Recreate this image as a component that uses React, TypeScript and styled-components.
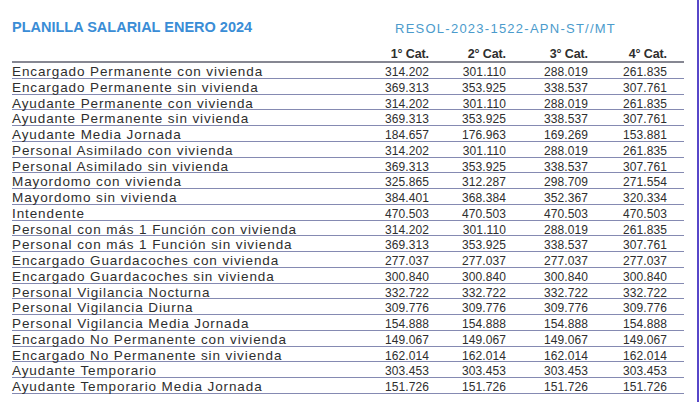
import React from "react";
import styled, { createGlobalStyle } from "styled-components";

const GlobalStyle = createGlobalStyle`
  html, body {
    margin: 0;
    padding: 0;
    background: #ffffff;
  }
  body {
    font-family: "Liberation Sans", Arial, Helvetica, sans-serif;
  }
`;

const Frame = styled.div`
  box-sizing: border-box;
  width: 699px;
  height: 402px;
  padding: 0 13px 0 12px;
  border-right: 2px solid #5747c9;
  background: #ffffff;
  overflow: hidden;
`;

const TitleRow = styled.div`
  display: grid;
  grid-template-columns: 383px 1fr;
  align-items: start;
  padding-top: 19px;
`;

const Title = styled.h1`
  margin: 0;
  font-size: 14.5px;
  line-height: 17px;
  font-weight: 700;
  color: #3a8dd6;
  white-space: nowrap;
`;

const Resol = styled.div`
  padding-top: 1px;
  font-size: 13px;
  line-height: 17px;
  letter-spacing: 1.25px;
  color: #4b9bcc;
  white-space: nowrap;
`;

const Table = styled.div`
  display: flex;
  flex-direction: column;
  margin-top: 10px;
`;

const Row = styled.div<{ $head?: boolean }>`
  box-sizing: border-box;
  display: grid;
  grid-template-columns: 1fr 77px 77px 82px 79px;
  padding-right: 17px;
  align-items: center;
  height: ${(p) => (p.$head ? "16px" : "15.75px")};
  border-bottom: ${(p) => (p.$head ? "2px solid #868792" : "1px solid #858ab2")};
  color: #2e2e2e;
  line-height: 14px;
  font-weight: ${(p) => (p.$head ? 700 : 400)};
`;

const Label = styled.span`
  padding-top: 2px;
  font-size: 13.5px;
  letter-spacing: 0.9px;
  white-space: nowrap;
`;

const Cell = styled.span<{ $head?: boolean }>`
  padding-top: ${(p) => (p.$head ? "0" : "2px")};
  font-size: ${(p) => (p.$head ? "12.5px" : "12px")};
  letter-spacing: ${(p) => (p.$head ? "-0.1px" : "0.1px")};
  text-align: right;
  white-space: nowrap;
`;

type Item = [string, string[]];

const same = (v: string) => [v, v, v, v];
const full = ["314.202", "301.110", "288.019", "261.835"];
const sin = ["369.313", "353.925", "338.537", "307.761"];

const rows: Item[] = [
  ["Encargado Permanente con vivienda", full],
  ["Encargado Permanente sin vivienda", sin],
  ["Ayudante Permanente con vivienda", full],
  ["Ayudante Permanente sin vivienda", sin],
  ["Ayudante Media Jornada", ["184.657", "176.963", "169.269", "153.881"]],
  ["Personal Asimilado con vivienda", full],
  ["Personal Asimilado sin vivienda", sin],
  ["Mayordomo con vivienda", ["325.865", "312.287", "298.709", "271.554"]],
  ["Mayordomo sin vivienda", ["384.401", "368.384", "352.367", "320.334"]],
  ["Intendente", same("470.503")],
  ["Personal con más 1 Función con vivienda", full],
  ["Personal con más 1 Función sin vivienda", sin],
  ["Encargado Guardacoches con vivienda", same("277.037")],
  ["Encargado Guardacoches sin vivienda", same("300.840")],
  ["Personal Vigilancia Nocturna", same("332.722")],
  ["Personal Vigilancia Diurna", same("309.776")],
  ["Personal Vigilancia Media Jornada", same("154.888")],
  ["Encargado No Permanente con vivienda", same("149.067")],
  ["Encargado No Permanente sin vivienda", same("162.014")],
  ["Ayudante Temporario", same("303.453")],
  ["Ayudante Temporario Media Jornada", same("151.726")],
];

const cats = ["1° Cat.", "2° Cat.", "3° Cat.", "4° Cat."];

const App: React.FC = () => {
  return (
    <>
      <GlobalStyle />
      <Frame>
        <TitleRow>
          <Title>PLANILLA SALARIAL ENERO 2024</Title>
          <Resol>RESOL-2023-1522-APN-ST//MT</Resol>
        </TitleRow>
        <Table>
          <Row $head>
            <Label />
            {cats.map((c) => (
              <Cell $head key={c}>
                {c}
              </Cell>
            ))}
          </Row>
          {rows.map(([name, values]) => (
            <Row key={name}>
              <Label>{name}</Label>
              {values.map((v, i) => (
                <Cell key={i}>{v}</Cell>
              ))}
            </Row>
          ))}
        </Table>
      </Frame>
    </>
  );
};

export default App;
